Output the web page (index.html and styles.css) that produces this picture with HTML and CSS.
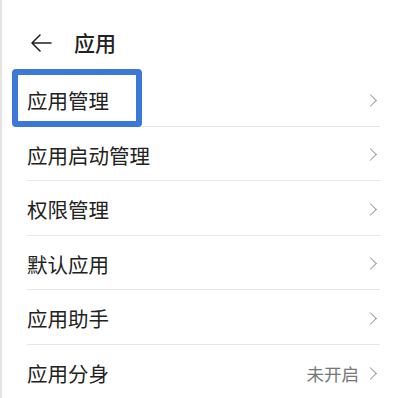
FILE: index.html
```html
<!DOCTYPE html>
<html lang="zh-CN">
<head>
    <meta charset="UTF-8">
    <meta name="viewport" content="width=device-width, initial-scale=1.0">
    <title>应用</title>
    <link rel="stylesheet" href="styles.css">
</head>
<body>
    <div class="screen">
        <div class="header">
            <svg class="back" width="22" height="20" viewBox="0 0 22 20">
                <path d="M21 10H2M10 2L2 10L10 18" fill="none" stroke="#222" stroke-width="1.6" stroke-linecap="round" stroke-linejoin="round"/>
            </svg>
            <h1>应用</h1>
        </div>
        <ul class="list">
            <li class="row">
                <span class="label">应用管理</span>
                <span class="chevron"></span>
                <div class="highlight"></div>
            </li>
            <li class="row">
                <span class="label">应用启动管理</span>
                <span class="chevron"></span>
            </li>
            <li class="row">
                <span class="label">权限管理</span>
                <span class="chevron"></span>
            </li>
            <li class="row">
                <span class="label">默认应用</span>
                <span class="chevron"></span>
            </li>
            <li class="row">
                <span class="label">应用助手</span>
                <span class="chevron"></span>
            </li>
            <li class="row last">
                <span class="label">应用分身</span>
                <span class="value">未开启</span>
                <span class="chevron"></span>
            </li>
        </ul>
    </div>
</body>
</html>
```

FILE: styles.css
```css
body {
    margin: 0;
    padding: 0;
    background: #fff;
    font-family: "Noto Sans CJK SC", "Noto Sans", sans-serif;
    color: #222;
}
.screen {
    height: 398px;
    border-left: 2px solid #e4e4e4;
    box-sizing: border-box;
    overflow: hidden;
}
.header {
    height: 72px;
    display: flex;
    align-items: center;
    padding-left: 28px;
    padding-top: 13px;
    box-sizing: border-box;
}
.back {
    display: block;
}
.header h1 {
    margin: 0 0 0 22px;
    font-size: 21px;
    font-weight: 500;
    line-height: 1;
}
.list {
    list-style: none;
    margin: 0;
    padding: 0 20px 0 25px;
}
.row {
    position: relative;
    display: flex;
    align-items: center;
    height: 54.5px;
    box-sizing: border-box;
    border-bottom: 1px solid #e6e6e6;
    padding-top: 3px;
}
.row.last {
    border-bottom: none;
}
.label {
    flex: 1;
    font-size: 20.5px;
    line-height: 1;
}
.value {
    font-size: 17.5px;
    color: #777;
    margin-right: 7px;
}
.chevron {
    width: 8px;
    height: 8px;
    border-top: 1.5px solid #9a9a9a;
    border-right: 1.5px solid #9a9a9a;
    transform: rotate(45deg);
    margin-right: 5px;
}
.highlight {
    position: absolute;
    left: -15px;
    top: -3px;
    width: 130px;
    height: 58px;
    border: 6px solid #3b78d8;
    border-radius: 4px;
    box-sizing: border-box;
}
```
